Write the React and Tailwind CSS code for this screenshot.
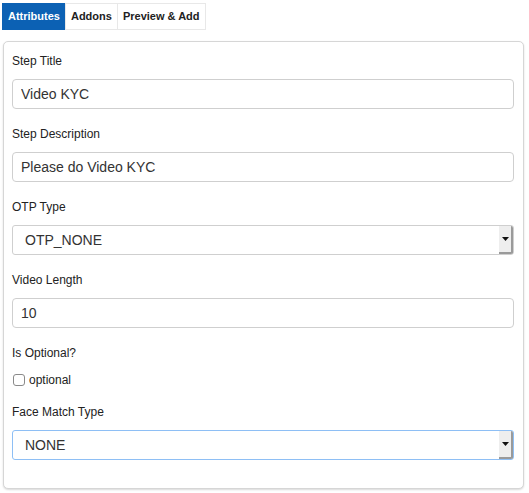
import { useState } from 'react';

const font = { fontFamily: '"Liberation Sans", Arial, sans-serif' };

const Label = ({ children }) => (
  <label className="block text-[12px] leading-[17px] text-[#222] mb-[9px]">
    {children}
  </label>
);

const TextField = ({ value }) => (
  <input
    className="block w-full h-[30px] px-[8px] rounded-[4px] border border-[#cfcfcf] bg-white text-[14px] text-[#333] outline-none"
    defaultValue={value}
  />
);

const SelectField = ({ value, focused }) => (
  <div
    className={`flex h-[30px] w-full items-stretch rounded-[3px] border bg-white ${
      focused ? 'border-[#8ebff5]' : 'border-[#cfcfcf]'
    }`}
  >
    <div className="flex flex-1 items-center pl-[12px] text-[14px] text-[#333]">
      {value}
    </div>
    {/* native-ish arrow button */}
    <div className="flex w-[14px] items-center justify-center rounded-r-[2px] border-r-2 border-b-2 border-[#9a9a9a] bg-[#eeeeee]">
      <svg width="7" height="4" viewBox="0 0 7 4">
        <path d="M0 0h7L3.5 4z" fill="#111" />
      </svg>
    </div>
  </div>
);

const App = () => {
  const [tab, setTab] = useState('Attributes');
  const tabs = ['Attributes', 'Addons', 'Preview & Add'];

  return (
    <div className="min-h-screen bg-white pt-[3px]" style={font}>
      <div className="ml-[2px] flex">
        {tabs.map((t) => (
          <button
            key={t}
            onClick={() => setTab(t)}
            className={`h-[27px] px-[5px] text-[11px] font-bold border ${
              tab === t
                ? 'bg-[#0c61b4] text-white border-[#0c61b4]'
                : 'bg-white text-[#222] border-[#e8e8e8] -ml-px'
            }`}
          >
            {t}
          </button>
        ))}
      </div>

      <div className="mt-[11px] ml-[3px] w-[521px] rounded-[5px] border border-[#d6d6d6] bg-white pl-[8px] pr-[9px] pt-[11px] pb-[28px] shadow-[0_1px_2px_rgba(0,0,0,0.15)]">
        <div className="mb-[17px]">
          <Label>Step Title</Label>
          <TextField value="Video KYC" />
        </div>
        <div className="mb-[17px]">
          <Label>Step Description</Label>
          <TextField value="Please do Video KYC" />
        </div>
        <div className="mb-[17px]">
          <Label>OTP Type</Label>
          <SelectField value="OTP_NONE" />
        </div>
        <div className="mb-[17px]">
          <Label>Video Length</Label>
          <TextField value="10" />
        </div>
        <div className="mb-[16px]">
          <Label>Is Optional?</Label>
          <label className="flex items-center h-[17px] text-[12px] text-[#222]">
            <span className="ml-[1px] mr-[4px] inline-block h-[12px] w-[12px] rounded-[3px] border border-[#8a8a8a] bg-white" />
            optional
          </label>
        </div>
        <div>
          <Label>Face Match Type</Label>
          <SelectField value="NONE" focused />
        </div>
      </div>
    </div>
  );
};

export default App;
